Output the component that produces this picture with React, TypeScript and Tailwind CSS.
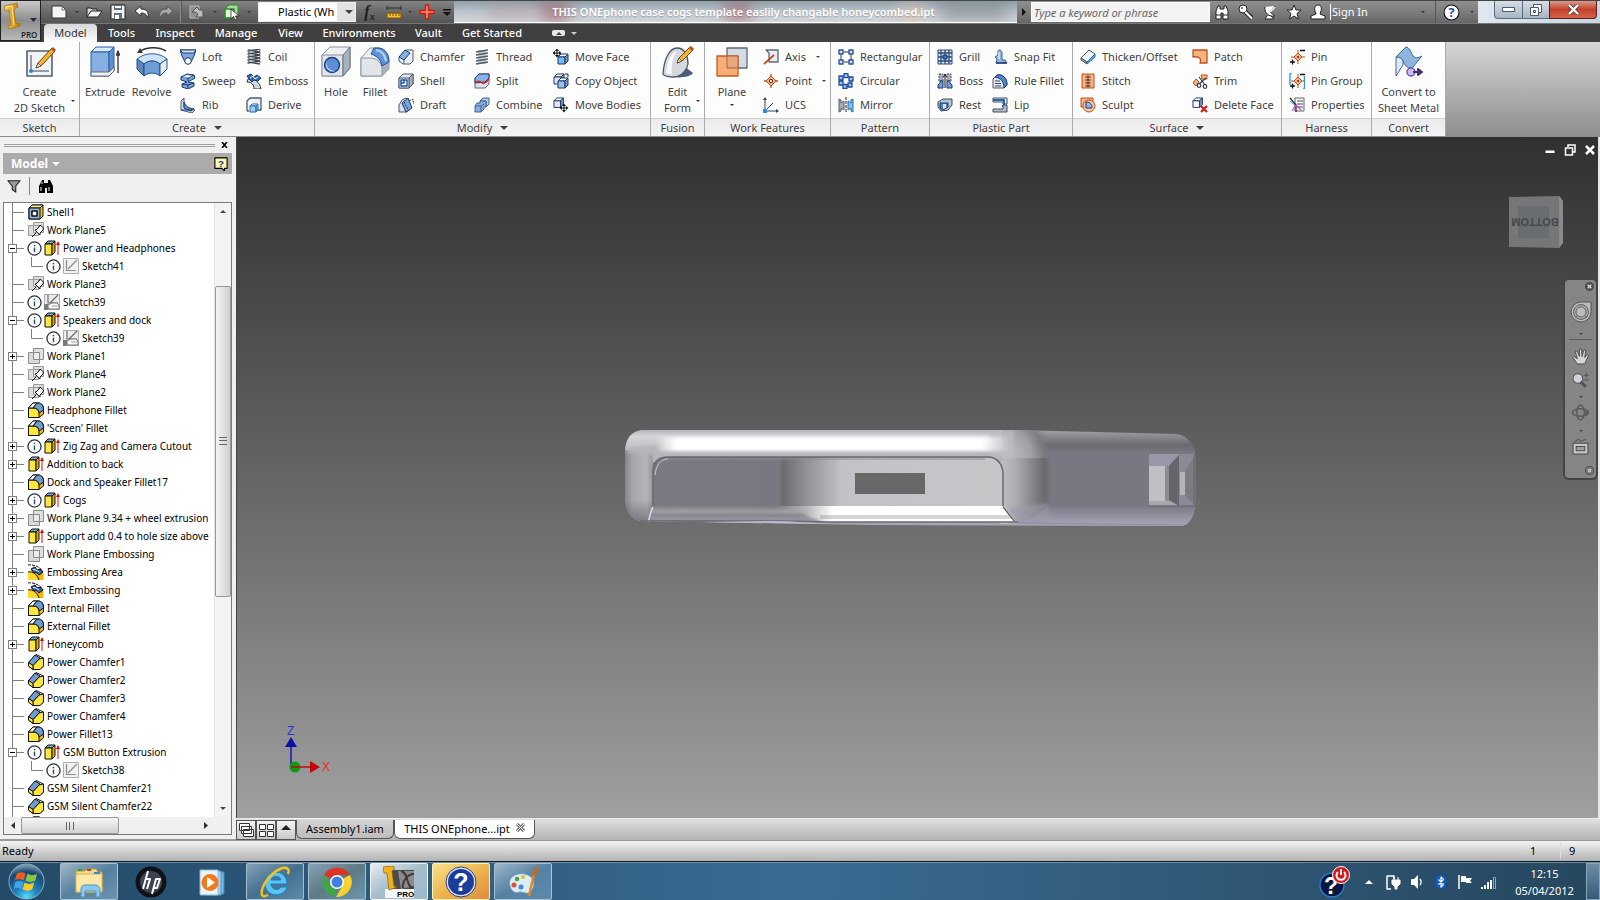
import React from "react";
import clsx from "clsx";

type IconProps = { size?: number; box?: string; children?: React.ReactNode };

const Svg: React.FC<IconProps> = ({ size = 16, box = "0 0 16 16", children }) => (
  <svg width={size} height={size} viewBox={box} fill="none" className="shrink-0" strokeLinejoin="round">
    {children}
  </svg>
);

const Big: React.FC<{ children: React.ReactNode }> = ({ children }) => (
  <Svg size={32} box="0 0 32 32">
    {children}
  </Svg>
);

const Arrow: React.FC<{ className?: string; size?: number; up?: boolean }> = ({
  className = "text-[#444]",
  size = 6,
  up,
}) => (
  <svg width={size} height={size / 2} viewBox="0 0 6 3" className={clsx("shrink-0", className)}>
    <path d={up ? "M0 3L3 0L6 3Z" : "M0 0L3 3L6 0Z"} fill="currentColor" />
  </svg>
);

const NAVY = "#1b3a70";
const BLUE = "#8fb6e4";
const ORANGE = "#f9b183";
const RUST = "#b9531a";

// 32px ribbon icons
const big: Record<string, React.ReactNode> = {
  sketch: (
    <Big>
      <path d="M3 5H28V30H3Z" fill="#f1f4f7" stroke="#555f6b" strokeWidth="1.6" />
      <path d="M7 9V26M7 25H25" stroke="#3a4450" />
      <circle cx="7" cy="25" r="2" fill="#2f7fd0" />
      <path d="M12 22L14 17L28 2L31 5L17 20Z" fill="#f6b32d" stroke="#6b4712" />
      <path d="M27 3L29 1L32 4L30 6Z" fill="#b5502a" />
      <path d="M12 22L14 17L17 20Z" fill="#f3dcb4" stroke="#333" strokeWidth=".6" />
    </Big>
  ),
  extrude: (
    <Big>
      <path d="M2 6L7 1H25L20 6Z" fill="#dbe9fa" stroke="#2b5ca8" />
      <path d="M2 6H20V30H2Z" fill="#86b0e2" stroke="#2b5ca8" />
      <path d="M20 6L25 1V25L20 30Z" fill="#5f8fce" stroke="#2b5ca8" />
      <path d="M2 26H20L25 21V25L20 30H2Z" fill="#eef1f5" stroke="#667" />
      <path d="M29 27V7M27.500 9L29 5L30.500 9Z" stroke="#333" fill="#333" strokeWidth="1.300" />
    </Big>
  ),
  revolve: (
    <Big>
      <path d="M3 6C9 1 22 0 30 5" stroke="#333" strokeWidth="1.500" />
      <path d="M1 7L4 2L7 7Z" fill="#333" />
      <path d="M1 13C9 6 23 6 31 13L24 18C19 14 13 14 8 18Z" fill="#cfe1f7" stroke="#2b5ca8" />
      <path d="M1 13V23L8 30V18Z" fill="#5d86bd" stroke="#24508f" />
      <path d="M8 18C13 14 19 14 24 18V30C19 26 13 26 8 30Z" fill="#6f9dd6" stroke="#24508f" />
      <path d="M31 13V23L24 30V18Z" fill="#e9eef6" stroke="#24508f" />
    </Big>
  ),
  hole: (
    <Big>
      <path d="M2 9L10 1H30V22L23 30H2Z" fill="#eef0f3" stroke="#8a93a0" />
      <path d="M2 9H23V30H2Z" fill="#e1e5ea" stroke="#8a93a0" />
      <path d="M23 9L30 1V22L23 30Z" fill="#a9b1bc" stroke="#667080" />
      <circle cx="12" cy="19" r="7.500" fill="#5c8fd6" stroke="#173f86" strokeWidth="1.400" />
      <path d="M7 14A8 8 0 0 0 16 25A7.500 7.500 0 0 1 7 14Z" fill="#dcebff" />
    </Big>
  ),
  fillet: (
    <Big>
      <path d="M2 12L11 2H20C27 3 30 9 30 16V23L23 30H2Z" fill="#eef0f3" stroke="#8a93a0" />
      <path d="M23 18L30 15V23L23 30Z" fill="#a9b1bc" />
      <path d="M2 12H11C18 12 23 17 23 23V30H2Z" fill="#e1e4e8" stroke="#8a93a0" />
      <path d="M15 2H20C27 3 30 9 30 16L23 20C22 14 18 10 12 8Z" fill="#5f94da" stroke="#24508f" />
      <path d="M17 4C23 5 26 9 27 15" stroke="#b8d3f4" strokeWidth="2" />
    </Big>
  ),
  form: (
    <Big>
      <path d="M6 30C16 33 29 31 31 27L22 20Z" fill="#4a5d7d" />
      <path d="M1 28C2 12 8 2 15 2C23 2 26 10 26 18C25 24 20 30 12 31C6 31 2 30 1 28Z" fill="#d4d9df" stroke="#4b5768" strokeWidth="1.300" />
      <path d="M4 27C5 15 9 6 15 5C11 11 9 18 10 29Z" fill="#f7f9fb" />
      <path d="M15 17L17 12L28 1L31 4L20 15Z" fill="#f6b32d" stroke="#6b4712" />
      <path d="M15 17L17 12L20 15Z" fill="#f3dcb4" stroke="#333" strokeWidth=".6" />
      <path d="M27 2L29 0L32 3L30 5Z" fill="#b5502a" />
    </Big>
  ),
  plane: (
    <Big>
      <path d="M11 2H31V22H11Z" fill="#d5dae2" stroke="#5d6877" strokeWidth="1.300" />
      <path d="M1 10H22V30H1Z" fill="#fbad78" stroke="#c35c1c" strokeWidth="1.300" />
      <path d="M11 10H22V22H11Z" fill="#e9a57b" stroke="#9c6a4c" />
    </Big>
  ),
  sheet: (
    <Big>
      <path d="M3 11L13 1C16 1 18 6 20 10C23 13 27 11 29 10L20 21C16 24 12 20 10 15C9 12 6 11 3 11Z" fill="#8db5e0" stroke="#44688f" />
      <path d="M3 11C6 11 9 12 10 15V19L3 30Z" fill="#dce8f5" stroke="#44688f" />
      <circle cx="18" cy="26" r="4" fill="#cdbcf0" stroke="#6b54a8" strokeWidth="1.400" />
      <path d="M20 26H26M25 23L29 26L25 29Z" stroke="#42306f" fill="#42306f" strokeWidth="2" />
    </Big>
  ),
};

const Cube = ({ x = 0, y = 0, s = 1, f = BLUE }: { x?: number; y?: number; s?: number; f?: string }) => (
  <g transform={`translate(${x} ${y}) scale(${s})`} stroke={NAVY}>
    <path d="M1 4L4 1H11L8 4Z" fill="#fff" />
    <path d="M1 4H8V11H1Z" fill={f} />
    <path d="M8 4L11 1V8L8 11Z" fill="#7f93b0" />
  </g>
);

const Cross = ({ x, y }: { x: number; y: number }) => (
  <g transform={`translate(${x} ${y})`} fill="#111">
    <path d="M3.500 1H4.500V7H3.500ZM1 3.500H7V4.500H1Z" />
    <path d="M4 -.5L6 2H2ZM4 8.500L6 6H2ZM-.5 4L2 2V6ZM8.500 4L6 2V6Z" />
  </g>
);

const Scissors = () => (
  <g stroke="#333d4d" strokeWidth="1.200">
    <path d="M7 4L13 12M14 5L7 11" />
    <circle cx="7" cy="12.500" r="1.800" fill="#fff" />
    <circle cx="13" cy="13.500" r="1.800" fill="#fff" />
  </g>
);

const PinMark = () => (
  <>
    <path d="M9 1V15M2 8H16" stroke={RUST} />
    <path d="M9 4L13 8L9 12L5 8Z" fill={ORANGE} stroke={RUST} />
    <circle cx="9" cy="8" r="1" fill="#6b2b0a" />
    <path d="M11 1.500H16M1 13H6M3.500 10.500V15.500" stroke="#111" strokeWidth="1.300" />
  </>
);

// 16px ribbon icons
const small: Record<string, React.ReactNode> = {
  Loft: (
    <>
      <path d="M0 1H16L14 7L11 13H5L2 7Z" fill="#7ea8dd" stroke={NAVY} />
      <path d="M0 1H16L14 4H3Z" fill="#d9e7f8" stroke={NAVY} />
      <circle cx="8" cy="12" r="3.300" fill="#f3f7fc" stroke={NAVY} />
    </>
  ),
  Sweep: (
    <>
      <path d="M1 4L7 1L14 2L15 5L8 9L14 10V13L8 16L2 14V11L7 9L1 7Z" fill="#77a3da" stroke={NAVY} />
      <path d="M1 4L8 5L14 2M8 5V8M8 12L14 10M8 12V15M2 11L8 12" stroke={NAVY} />
      <path d="M2 4.500L7 2L12 3L8 4.500Z" fill="#eaf2fc" />
    </>
  ),
  Rib: (
    <>
      <path d="M1 4L4 1V10L15 13L12 16L1 13Z" fill="#d4dbe5" stroke="#4d596c" />
      <path d="M4 5C6 10 9 11 14 12L11 14L4 11Z" fill="#5b92db" stroke={NAVY} />
      <path d="M1 13H12" stroke={NAVY} />
    </>
  ),
  Coil: (
    <>
      {[2, 5, 8, 11, 14].map((y) => (
        <path key={y} d={`M2 ${y}L14 ${y - 2}M2 ${y - 1}L14 ${y + 1}`} stroke="#3d4650" strokeWidth="1.300" />
      ))}
      <path d="M2 1V15M14 0V15" stroke="#6a727b" strokeDasharray="2 1" />
    </>
  ),
  Emboss: (
    <>
      <path d="M2 6C8 5 14 9 15 16H8C8 12 6 9 1 9Z" fill="#d3d8df" stroke="#333" />
      <path d="M1 3L5 1L8 4L11 2L15 5L12 8L8 7L6 9L3 6Z" fill="#2b66b8" stroke={NAVY} />
      <path d="M4 5L7 3L9 6L12 4" stroke="#fff" />
    </>
  ),
  Derive: (
    <>
      <path d="M4 1H15V13H12M1 14V4L4 1M1 14H3" fill="#eef0f3" stroke="#4d596c" strokeWidth="1.300" />
      <path d="M4 9L6 7H12L10 9Z" fill="#fff" stroke="#1f6fb8" />
      <path d="M4 9H10V15H4ZM10 9L12 7V13L10 15Z" fill="#9fd0f3" stroke="#1f6fb8" />
    </>
  ),
  Chamfer: (
    <>
      <path d="M1 8L8 1H15V12L12 15H5L1 12Z" fill="#eceff3" stroke="#4d596c" />
      <path d="M1 8L7 1L12 4L6 11Z" fill="#86b0e2" stroke={NAVY} />
      <path d="M6 11V15" stroke="#4d596c" />
    </>
  ),
  Shell: (
    <>
      <path d="M1 5L5 1H15V11L11 15H1Z" fill="#e3e7ed" stroke="#4d596c" />
      <path d="M11 5L15 1V11L11 15Z" fill="#a8b2c0" stroke="#4d596c" />
      <path d="M1 5H11V15H1Z" fill="#dfe6ef" stroke="#4d596c" />
      <path d="M3 7H9V13H3ZM3 10H6V7" fill="#fff" stroke="#1e55b0" strokeWidth="1.400" />
    </>
  ),
  Draft: (
    <>
      <path d="M1 8L4 3L8 1L11 4L9 15H1Z" fill="#dde1e7" stroke="#4d596c" />
      <path d="M4 6L10 1L14 11L8 15Z" fill="#78a7e2" stroke={NAVY} />
      <path d="M6 5L11 14M11 4L15 2L15.500 7" stroke="#333" strokeDasharray="2 1" />
    </>
  ),
  Thread: (
    <>
      <path d="M4 1H12V15H4Z" fill="#c9d0d8" />
      {[2, 5, 8, 11, 14].map((y) => (
        <path key={y} d={`M2 ${y + 1}L14 ${y - 1}`} stroke="#515c69" strokeWidth="1.300" />
      ))}
    </>
  ),
  Split: (
    <>
      <path d="M1 5L5 1H15V11L11 15H1Z" fill="#dfe3e9" stroke="#5d6877" />
      <path d="M1 5L5 1H15V5L11 9L1 10Z" fill="#86b4ea" stroke={NAVY} />
      <path d="M1 10C4 7 6 8 8 10C11 12 13 8 15 6" stroke="#e02020" strokeWidth="1.500" />
    </>
  ),
  Combine: (
    <>
      <path d="M6 4L9 1H15V7L12 10V4Z" fill="#b6cdea" stroke="#3e6094" />
      <path d="M6 4H12V10H10V12L7 15H1V9L3 6H6Z" fill="#8ab0df" stroke="#3e6094" />
      <path d="M1 9H7V15M7 9L10 7" stroke="#3e6094" />
    </>
  ),
  "Move Face": (
    <>
      <Cube x={4} y={4} f="#79bdf0" />
      <Cross x={0} y={0} />
    </>
  ),
  "Copy Object": (
    <>
      <Cube f="#e3e7ec" />
      <Cube x={4} y={4} f="#9dbfea" />
      <path d="M12 1L15 1V4" stroke="#222" />
    </>
  ),
  "Move Bodies": (
    <>
      <Cube s={0.95} f="#e3e7ec" />
      <Cross x={7} y={7} />
    </>
  ),
  Axis: (
    <>
      <path d="M3 1H15V13H6V4Z" fill="#e8ebef" stroke="#5d6877" strokeWidth="1.300" />
      <path d="M1 15L11 6" stroke="#c3481a" strokeWidth="1.700" />
    </>
  ),
  Point: (
    <>
      <path d="M8 1V15M1 8H15" stroke={RUST} strokeWidth="1.300" />
      <path d="M8 3L13 8L8 13L3 8Z" fill={ORANGE} stroke={RUST} />
      <circle cx="8" cy="8" r="1.600" fill="#fff" stroke="#5b2408" />
    </>
  ),
  UCS: (
    <>
      <path d="M2 1V14H15M2 14L10 6" stroke="#3b444f" />
      <path d="M0 3L2 0L4 3ZM13 12L16 14L13 16Z" fill="#3b444f" />
      <rect x="0" y="12" width="4" height="4" fill="#2f8be0" />
    </>
  ),
  Rectangular: (
    <>
      <path d="M6 3H11M6 13H11M3 6V11M13 6V11" stroke="#333" />
      {[[1, 1], [11, 1], [1, 11], [11, 11]].map(([x, y]) => (
        <rect key={`${x}-${y}`} x={x} y={y} width="4" height="4" fill="#d8e6f8" stroke="#1e4f9c" strokeWidth="1.300" />
      ))}
    </>
  ),
  Circular: (
    <>
      <circle cx="8" cy="8" r="5.500" stroke="#333" />
      {[[6, 0.7], [11, 4], [10, 10], [5, 11.5], [1, 8], [1, 3]].map(([x, y]) => (
        <rect key={`${x}-${y}`} x={x} y={y} width="4" height="4" fill="#9ec1ef" stroke="#1e4f9c" strokeWidth="1.300" />
      ))}
    </>
  ),
  Mirror: (
    <>
      <path d="M8 0V16" stroke="#222" strokeDasharray="3 1" />
      <path d="M1 2L3 3V6L6 4V13L3 11V14L1 15Z" fill="#a6adb5" stroke="#555e69" />
      <path d="M15 2L13 3V6L10 4V13L13 11V14L15 15Z" fill="#7fc0ec" stroke="#2870a8" />
    </>
  ),
  Grill: (
    <>
      <rect x="1" y="1" width="14" height="14" fill="#dce7f5" stroke="#2c4a77" />
      <path d="M4 1V15M8 1V15M12 1V15M1 4H15M1 8H15M1 12H15" stroke="#2c4a77" strokeWidth="1.300" />
      <rect x="6" y="6" width="4" height="4" fill="#3f70bd" stroke={NAVY} />
    </>
  ),
  Boss: (
    <>
      <path d="M2 1H6V8H2ZM10 1H14V8H10Z" fill="#aab3bf" stroke="#444f5f" strokeDasharray="2 1" />
      <path d="M1 15V12L3 10V8H6V15ZM15 15V12L13 10V8H10V15Z" fill="#6f9edc" stroke={NAVY} />
      <path d="M8 2V15M6.500 4L8 1L9.500 4" stroke="#111" />
    </>
  ),
  Rest: (
    <>
      <path d="M1 5L6 2H15V8L11 13L4 14L1 10Z" fill="#b9c2ce" stroke="#3b4a62" />
      <path d="M3 6H11V10L6 13L3 11Z" fill="#4b7fc9" stroke={NAVY} />
      <path d="M6 7H9V11L6 12Z" fill="#dbe8f8" />
    </>
  ),
  "Snap Fit": (
    <>
      <path d="M6 2C7 0 10 1 10 4V11H13L15 14H4L5 10L3 8L6 6Z" fill="#94b5df" stroke="#3d5f92" />
      <path d="M4 14H15" stroke={NAVY} strokeWidth="1.500" />
      <path d="M7 3V10" stroke="#fff" />
    </>
  ),
  "Rule Fillet": (
    <>
      <path d="M1 6L5 2C11 1 15 5 15 12L12 15H1Z" fill="#e3e7ec" stroke="#4d596c" />
      <path d="M5 2C11 1 15 5 15 12L12 15C12 9 9 5 3 4Z" fill="#4d86d6" stroke={NAVY} />
      <path d="M3 8H8M3 10.500H9M3 13H9" stroke="#3b4a62" />
    </>
  ),
  Lip: (
    <>
      <path d="M1 1H15V7H11V5H1Z" fill="#f0f3f7" stroke="#3b4a62" />
      <path d="M1 3H12V9H10" stroke="#2a62b8" strokeWidth="2" />
      <path d="M11 8H15V15H1V12H11Z" fill="#b7bec8" stroke="#3b4a62" />
    </>
  ),
  "Thicken/Offset": (
    <>
      <path d="M1 9L9 1L15 5L7 13Z" fill="#f2f5f8" stroke="#4d596c" />
      <path d="M1 9L7 13V15L1 11Z" fill="#9aa5b3" stroke="#4d596c" />
      <path d="M7 13L15 5V8L7 15Z" fill="#67b1ea" stroke="#1f6fb8" />
    </>
  ),
  Stitch: (
    <>
      <rect x="2" y="1" width="12" height="14" fill={ORANGE} stroke={RUST} />
      <path d="M8 1V15" stroke={RUST} />
      <path d="M5.500 4H10.500M5.500 7H10.500M5.500 10H10.500M5.500 13H10.500" stroke="#222" strokeWidth="1.200" />
    </>
  ),
  Sculpt: (
    <>
      <path d="M1 1H13V10H1Z" fill={ORANGE} stroke={RUST} />
      <circle cx="9" cy="9" r="6" fill="#f9c5a3" stroke={RUST} />
      <path d="M6 5C10 5 12 7 12 11H6Z" fill="#8fb8ec" stroke={NAVY} />
    </>
  ),
  Patch: <path d="M1 1H15V14H8C10 9 6 7 1 8Z" fill={ORANGE} stroke={RUST} strokeWidth="1.300" />,
  Trim: (
    <>
      <path d="M9 2H15V6H10ZM1 10L4 6L7 9L4 13Z" fill={ORANGE} stroke={RUST} />
      <Scissors />
    </>
  ),
  "Delete Face": (
    <>
      <Cube f="#f3f6fa" s={0.95} />
      <path d="M9 9L15 15M15 9L9 15" stroke="#d51c1c" strokeWidth="2.200" />
    </>
  ),
  Pin: <PinMark />,
  "Pin Group": (
    <>
      <PinMark />
      <path d="M3 0H1V12M14 16H15.500V3" stroke="#2f9be8" strokeWidth="1.400" />
    </>
  ),
  Properties: (
    <>
      <path d="M6 1H15V14H6Z" fill="#f6f6f6" stroke="#666" />
      <path d="M8 4H14M8 7H14M8 10H14" stroke="#555" />
      <path d="M1 1L7 8V15" stroke="#333" strokeWidth="1.300" />
      <path d="M7 8L3 14M7 8L12 13" stroke="#c74ad0" strokeWidth="1.300" />
      <path d="M1 4L7 9" stroke="#2f8be0" />
    </>
  ),
};

type PanelProps = { label: string; width: string; more?: boolean; children: React.ReactNode };

const Panel: React.FC<PanelProps> = ({ label, width, more, children }) => (
  <section className={clsx("flex shrink-0 flex-col border-r border-[#aaa] bg-[#fdfdfd]", width)}>
    <div className="flex flex-1 pt-[3px]">{children}</div>
    <h2 className="flex h-[18px] items-center justify-center gap-2 border-t border-[#d0d0d0] bg-linear-to-b from-[#ebebeb] to-[#f3f3f3]">
      {label}
      {more && <Arrow size={8} />}
    </h2>
  </section>
);

type BigButtonProps = { icon: string; lines: string[]; width: string; more?: boolean };

const BigButton: React.FC<BigButtonProps> = ({ icon, lines, width, more }) => (
  <button className={clsx("relative flex shrink-0 flex-col items-center pt-px leading-4", width)}>
    {big[icon]}
    <span className="mt-1.5 whitespace-nowrap">
      {lines.map((line) => (
        <span key={line} className="block">
          {line}
        </span>
      ))}
    </span>
    {more && lines.length === 1 && <Arrow size={4} className="mt-1 text-[#333]" />}
    {more && lines.length > 1 && (
      <span className="absolute right-1 bottom-4">
        <Arrow size={4} className="text-[#333]" />
      </span>
    )}
  </button>
);

const Column: React.FC<{ items: string[]; width?: string; more?: string[] }> = ({ items, width, more = [] }) => (
  <div className={clsx("flex shrink-0 flex-col", width)}>
    {items.map((item) => (
      <button key={item} className="flex h-6 items-center gap-1.5 whitespace-nowrap">
        <Svg>{small[item]}</Svg>
        {item}
        {more.includes(item) && (
          <span className="ml-1">
            <Arrow size={4} />
          </span>
        )}
      </button>
    ))}
  </div>
);

const Ribbon = () => (
  <div className="flex h-[95px] shrink-0 overflow-hidden border-b border-[#8b8b8b] bg-linear-to-b from-[#d6d6d6] to-[#8e8e8e] text-[#3f3f3f]">
    <Panel label="Sketch" width="w-20">
      <BigButton icon="sketch" lines={["Create", "2D Sketch"]} width="w-full" more />
    </Panel>
    <Panel label="Create" width="w-[235px]" more>
      <BigButton icon="extrude" lines={["Extrude"]} width="w-[50px]" />
      <BigButton icon="revolve" lines={["Revolve"]} width="w-[43px]" />
      <div className="w-[7px]" />
      <Column items={["Loft", "Sweep", "Rib"]} width="w-[66px]" />
      <Column items={["Coil", "Emboss", "Derive"]} />
    </Panel>
    <Panel label="Modify" width="w-[336px]" more>
      <BigButton icon="hole" lines={["Hole"]} width="w-[42px]" />
      <BigButton icon="fillet" lines={["Fillet"]} width="w-9" />
      <div className="w-[5px]" />
      <Column items={["Chamfer", "Shell", "Draft"]} width="w-[76px]" />
      <Column items={["Thread", "Split", "Combine"]} width="w-[79px]" />
      <Column items={["Move Face", "Copy Object", "Move Bodies"]} />
    </Panel>
    <Panel label="Fusion" width="w-[54px]">
      <BigButton icon="form" lines={["Edit", "Form"]} width="w-full" more />
    </Panel>
    <Panel label="Work Features" width="w-[126px]">
      <BigButton icon="plane" lines={["Plane"]} width="w-[54px]" more />
      <div className="w-1" />
      <Column items={["Axis", "Point", "UCS"]} more={["Axis", "Point"]} />
    </Panel>
    <Panel label="Pattern" width="w-[99px]">
      <div className="w-[7px]" />
      <Column items={["Rectangular", "Circular", "Mirror"]} />
    </Panel>
    <Panel label="Plastic Part" width="w-[143px]">
      <div className="w-[7px]" />
      <Column items={["Grill", "Boss", "Rest"]} width="w-[55px]" />
      <Column items={["Snap Fit", "Rule Fillet", "Lip"]} />
    </Panel>
    <Panel label="Surface" width="w-[209px]" more>
      <div className="w-[7px]" />
      <Column items={["Thicken/Offset", "Stitch", "Sculpt"]} width="w-[112px]" />
      <Column items={["Patch", "Trim", "Delete Face"]} />
    </Panel>
    <Panel label="Harness" width="w-[90px]">
      <div className="w-[7px]" />
      <Column items={["Pin", "Pin Group", "Properties"]} />
    </Panel>
    <Panel label="Convert" width="w-[74px]">
      <BigButton icon="sheet" lines={["Convert to", "Sheet Metal"]} width="w-full" />
    </Panel>
  </div>
);

const Tool: React.FC<{ label: string; width: string; children: React.ReactNode }> = ({ label, width, children }) => (
  <button aria-label={label} className={clsx("flex h-full shrink-0 items-center justify-center", width)}>
    {children}
  </button>
);

const QuickAccess = () => (
  <div className="flex h-full shrink-0 items-center bg-linear-to-b from-[#858585] via-[#686868] to-[#555] pl-[5px]">
    <Tool label="New" width="w-[26px]">
      <Svg><path d="M1 2H11L15 6V14H1Z" fill="#f4f4f4" stroke="#333" /><path d="M11 2V6H15" stroke="#777" /></Svg>
    </Tool>
    <Tool label="New options" width="w-2.5"><Arrow size={4} className="text-[#333]" /></Tool>
    <Tool label="Open" width="w-6">
      <Svg><path d="M1 13V4H5L6 5H11V7" fill="#d5dade" stroke="#222" /><path d="M1 13L5 7H16L12 13Z" fill="#f4f4f4" stroke="#222" /></Svg>
    </Tool>
    <Tool label="Save" width="w-6">
      <Svg><path d="M1 1H15V15H1Z" fill="#f0f2f4" stroke="#222" /><path d="M4 1H12V6H4ZM4 9H12V15H4Z" fill="#5e6c7c" /><path d="M5 2H11V4H5ZM5 11H9V15H5Z" fill="#fff" /></Svg>
    </Tool>
    <Tool label="Undo" width="w-6">
      <Svg><path d="M1 7L7 2V5C13 5 15 8 14 14C12 10 11 9 7 9V12Z" fill="#fff" stroke="#333" /></Svg>
    </Tool>
    <Tool label="Redo" width="w-6">
      <Svg><path d="M15 7L9 2V5C3 5 1 8 2 14C4 10 5 9 9 9V12Z" fill="#aaa" stroke="#555" /></Svg>
    </Tool>
    <span className="mx-0.5 h-full w-0.5 border-l border-[#8c8c8c] bg-[#555]" />
    <Tool label="Update" width="w-[26px]">
      <Svg><path d="M1 2H10V14H1Z" fill="#8f8f8f" stroke="#bbb" /><path d="M3 8L8 3L10 6H14V13H7L9 10L6 8Z" fill="#bdbdbd" stroke="#555" /></Svg>
    </Tool>
    <Tool label="Update options" width="w-2.5"><Arrow size={4} className="text-[#333]" /></Tool>
    <Tool label="Select" width="w-6">
      <Svg>
        <path d="M1 5L5 1H14V10L10 14H1Z" fill="#a8d89a" stroke="#2f8a2a" />
        <path d="M1 5H10V14H1Z" fill="#e3f3df" stroke="#2f8a2a" strokeWidth="1.500" />
        <path d="M7 5V15L9.500 12.500L11 16L13 15L11.500 12H15Z" fill="#fff" stroke="#222" strokeWidth=".8" />
      </Svg>
    </Tool>
    <Tool label="Select options" width="w-2.5"><Arrow size={4} className="text-[#333]" /></Tool>
    <label className="relative ml-1 flex h-5 w-[98px] items-center border border-[#eee] bg-[#ececec] text-black">
      <select aria-label="Material" className="h-full w-full appearance-none overflow-hidden border-r-[18px] border-[#e2e2e2] bg-white pl-[19px]">
        <option>Plastic (Wh</option>
      </select>
      <span className="pointer-events-none absolute right-0.5"><Arrow size={8} /></span>
    </label>
    <Tool label="Parameters" width="w-[27px]">
      <span className="font-['Liberation_Serif',serif] text-base font-bold text-[#1c1c1c] italic">
        f<sub className="text-[10px]">x</sub>
      </span>
    </Tool>
    <Tool label="Measure" width="w-[22px]">
      <Svg><path d="M1 4H15M1 2V6M15 2V6" stroke="#2a2a2a" /><path d="M1 9H15V14H1Z" fill="#f7c12d" stroke="#7a4c0a" /><path d="M4 9V12M7 9V12M10 9V12M13 9V12" stroke="#7a4c0a" /></Svg>
    </Tool>
    <Tool label="Measure options" width="w-2.5"><Arrow size={4} className="text-[#333]" /></Tool>
    <Tool label="Add" width="w-6">
      <Svg><path d="M6.500 1H9.500V6.500H15V9.500H9.500V15H6.500V9.500H1V6.500H6.500Z" fill="#f38a6d" stroke="#d3190c" strokeWidth="1.300" /></Svg>
    </Tool>
    <Tool label="Customize" width="w-[15px]">
      <svg width="8" height="7" viewBox="0 0 8 7"><path d="M0 0H8V1.500H0ZM0 3H8L4 7Z" fill="#111" /></svg>
    </Tool>
  </div>
);

const InfoBar = () => (
  <div className="flex h-full shrink-0 items-center bg-linear-to-b from-[#8f8f8f] via-[#7d7d7d] to-[#666] text-white">
    <button aria-label="Collapse search" className="flex w-3.5 justify-center">
      <svg width="4" height="8" viewBox="0 0 4 8"><path d="M0 0L4 4L0 8Z" fill="#111" /></svg>
    </button>
    <input
      aria-label="Search help"
      placeholder="Type a keyword or phrase"
      className="h-5 w-[179px] border border-white bg-[#f3f3f3] px-0.5 italic placeholder:text-[#666]"
    />
    <Tool label="Find" width="w-6">
      <Svg><path d="M2 15V7L4 2H6V5H10V2H12L14 7V15H9V9H7V15Z" fill="#fff" stroke="#222" /><path d="M2 11H7M9 11H14" stroke="#222" /></Svg>
    </Tool>
    <Tool label="Subscription" width="w-6">
      <Svg><circle cx="5" cy="5" r="4" fill="#fff" stroke="#222" /><circle cx="4" cy="4" r="1" fill="#444" /><path d="M7.500 8L14 14.500M12 12.500L14 11" stroke="#222" strokeWidth="4" /><path d="M7.500 8L14 14.500" stroke="#fff" strokeWidth="2.200" /></Svg>
    </Tool>
    <Tool label="Communication" width="w-6">
      <Svg><path d="M3 3C2 9 7 13 13 12L8 8L13 2M5 12L3 15H12L9 12" fill="#fff" stroke="#222" /><path d="M8 8L13 3" stroke="#fff" strokeWidth="1.500" /></Svg>
    </Tool>
    <Tool label="Favorites" width="w-6">
      <Svg><path d="M8 1L10 6H15L11 9.500L12.500 15L8 12L3.500 15L5 9.500L1 6H6Z" fill="#fff" stroke="#222" /></Svg>
    </Tool>
    <Tool label="Account" width="w-6">
      <Svg><path d="M8 1C11 1 12 4 11 7L10 10L15 12V15H1V12L6 10L5 7C4 4 5 1 8 1Z" fill="#fff" stroke="#222" /></Svg>
    </Tool>
    <button className="flex h-full w-[106px] items-center border-r border-[#555]">
      <span className="border-l border-white px-px leading-4">Sign In</span>
      <span className="ml-auto pr-2.5"><Arrow size={4} className="text-[#333]" /></span>
    </button>
    <Tool label="Help" width="w-[30px]">
      <Svg size={17}>
        <circle cx="8" cy="8" r="7" fill="#fff" stroke="#111" />
        <text x="8" y="12.500" textAnchor="middle" fontSize="12" fontWeight="bold" fill="#1b4fb0" fontFamily="Open Sans">?</text>
      </Svg>
    </Tool>
    <Tool label="Help options" width="w-3"><Arrow size={4} className="text-[#333]" /></Tool>
  </div>
);

const tabs: [string, string][] = [
  ["Tools", "w-[49px]"],
  ["Inspect", "w-[58px]"],
  ["Manage", "w-16"],
  ["View", "w-[45px]"],
  ["Environments", "w-[92px]"],
  ["Vault", "w-[47px]"],
  ["Get Started", "w-20"],
];

const Header = () => (
  <header className="flex h-[42px] shrink-0 bg-[#404040]">
    <button aria-label="Application menu" className="h-[41px] w-[41px] shrink-0 border border-[#222] bg-linear-to-b from-[#c9c9c9] via-[#8e8e8e] to-[#b9b9b9]">
      <svg width="39" height="39" viewBox="0 0 39 39">
        <defs>
          <linearGradient id="gold" x1="0" x2="1">
            <stop offset="0" stopColor="#ffd45a" />
            <stop offset="1" stopColor="#c07a05" />
          </linearGradient>
        </defs>
        <path d="M3 5L16 2L17 6L13 8L15 23L19 22V25L8 28L7 25L10 24L8 9L4 10Z" fill="url(#gold)" stroke="#a96c06" strokeWidth=".7" />
        <path d="M5 6L11 5L13 24" stroke="#ffe9a3" fill="none" />
        <path d="M29 17H36L32.500 21Z" fill="#222b3a" />
        <text x="20" y="37" fontSize="8" fill="#222" fontFamily="Open Sans" fontWeight="600">PRO</text>
      </svg>
    </button>
    <div className="flex min-w-0 flex-1 flex-col">
      <div className="flex h-6 border-t border-b border-t-[#444] border-b-[#777]">
        <QuickAccess />
        <div className="relative flex min-w-0 flex-1 items-center justify-center overflow-hidden border-b border-white bg-linear-to-b from-[#8fa0aa] via-[#bcc4cb] to-[#d3d7db] pl-4">
          <span className="absolute left-[85px] h-5 w-8 rounded-full bg-[#a04a52]/60 blur-sm" />
          <span className="absolute left-[270px] h-5 w-7 rounded-full bg-[#a04a52]/60 blur-sm" />
          <span className="absolute left-8 h-3 w-12 rounded-full bg-[#b07c80]/40 blur-sm" />
          <span className="absolute right-2 h-4 w-[70px] rounded-full bg-[#555]/40 blur-sm" />
          <span className="absolute right-[90px] h-5 w-8 rounded-full bg-[#e0c5b0]/60 blur-sm" />
          <h1 className="relative truncate font-semibold text-white text-shadow-xs">
            THIS ONEphone case cogs template easlily changable honeycombed.ipt
          </h1>
        </div>
        <InfoBar />
        <div className="flex h-full w-[122px] shrink-0 items-start bg-linear-to-r from-[#dfe8ee] to-[#c5d6e2] pl-4">
          <button aria-label="Minimize" className="flex h-[18px] w-[29px] items-center justify-center rounded-bl border border-t-0 border-[#5c6c7b] bg-linear-to-b from-[#d5dee6] to-[#a8b6c3]">
            <svg width="13" height="5"><path d="M.5 .5H12.500V4.500H.5Z" fill="#fff" stroke="#4c5866" /></svg>
          </button>
          <button aria-label="Restore" className="flex h-[18px] w-[26px] items-center justify-center border-b border-[#5c6c7b] bg-linear-to-b from-[#d5dee6] to-[#a8b6c3]">
            <svg width="12" height="12" fill="none" stroke="#4c5866"><path d="M3.500 .5H11.500V8.500H3.500Z" fill="#fff" /><path d="M.5 3.500H8.500V11.500H.5Z" fill="#fff" /><path d="M3.500 6.500H5.500V8.500H3.500Z" /></svg>
          </button>
          <button aria-label="Close" className="flex h-[18px] w-12 items-center justify-center rounded-br border border-t-0 border-[#5a2018] bg-linear-to-b from-[#dd9a8c] via-[#c2402a] to-[#d5644a]">
            <svg width="13" height="11" viewBox="0 0 13 11"><path d="M2 1L11 10M11 1L2 10" stroke="#5a3a38" strokeWidth="4" /><path d="M2 1L11 10M11 1L2 10" stroke="#fff" strokeWidth="2.400" /></svg>
          </button>
        </div>
      </div>
      <nav className="flex flex-1 items-stretch pl-[3px] text-white">
        <button className="w-[53px] rounded-t-sm bg-linear-to-b from-[#d8d8d8] to-[#fdfdfd] text-[#333]">Model</button>
        {tabs.map(([name, width]) => (
          <button key={name} className={clsx("shrink-0 font-medium", width)}>
            {name}
          </button>
        ))}
        <button aria-label="Minimize ribbon" className="ml-5 flex items-center gap-1.5">
          <span className="flex h-1.5 w-[13px] items-center justify-center rounded-xs bg-[#e8e8ee]">
            <Arrow size={6} up />
          </span>
          <Arrow size={6} className="text-[#ccc]" />
        </button>
      </nav>
    </div>
  </header>
);

// icons of the model browser
const tree: Record<string, React.ReactNode> = {
  shell: (
    <g stroke="#111">
      <path d="M1 4L4 1H15V12L12 15H1Z" fill="#f5c400" />
      <path d="M1 4L4 1H15L12 4Z" fill="#fff38a" />
      <path d="M1 4H12V15H1Z" fill="#8ab0dc" />
      <path d="M4 7H9V12H4Z" fill="#fff" strokeWidth="1.500" />
    </g>
  ),
  plane: (
    <g stroke="#8a8a8a">
      <path d="M5.500 .5H15.500V11.500H5.500Z" fill="#e0e0e0" />
      <path d="M.5 4.500H11.500V15.500H.5Z" fill="#cfcfcf" fillOpacity=".8" />
      <path d="M5.500 4.500H11.500V11.500H5.500Z" fill="#ececec" />
    </g>
  ),
  pinned: (
    <g>
      <path d="M5.500 .5H15.500V10.500H5.500ZM.5 3.500H10.500V13.500H.5Z" fill="#dcdcdc" stroke="#9a9a9a" />
      <path d="M4 15L8 11" stroke="#111" />
      <path d="M7 8L12 13L12 11L15 8L15.500 6L12 3L11 5L8 8Z" fill="#fff" stroke="#111" />
    </g>
  ),
  extrude: (
    <g stroke="#111">
      <path d="M1 4L4 1H11L8 4Z" fill="#7aa5d8" />
      <path d="M1 4H8V15H1Z" fill="#ffe83a" />
      <path d="M8 4L11 1V12L8 15Z" fill="#e0a800" />
      <path d="M14 15V3" stroke="#d01010" />
      <path d="M12 5L14 1L16 5Z" fill="#d01010" stroke="none" />
    </g>
  ),
  sketch: (
    <g>
      <path d="M.5 .5H15.500V15.500H.5Z" fill="#f2f2f2" stroke="#b0b0b0" />
      <path d="M3.500 2V12.500H13M5 11L14 2" stroke="#8a8a8a" strokeWidth="1.200" />
    </g>
  ),
  shared: (
    <g>
      <path d="M.5 .5H15.500V15.500H.5Z" fill="#ededed" stroke="#aaa" />
      <path d="M4 1V9H14M6 9L14 1" stroke="#6c6c6c" strokeWidth="1.200" />
      <path d="M0 10H4V16H0Z" fill="#7b7b7b" />
      <path d="M4 11L8 9H13L15 11V15H6L4 14Z" fill="#fff" stroke="#777" />
      <path d="M8 12H14" stroke="#999" />
    </g>
  ),
  fillet: (
    <g stroke="#111">
      <path d="M.5 6L5 1H10C14 1 15.500 4 15.500 7V12L11 15.500H.5Z" fill="#f0b800" />
      <path d="M.5 6H5C9 6 11 9 11 11V15.500H.5Z" fill="#ffe83a" />
      <path d="M.5 6L5 1H9L5 6Z" fill="#fff" />
      <path d="M9 1H10C14 1 15.500 4 15.500 8L11 11C11 8 9 6 5 6Z" fill="#6d9bd2" />
    </g>
  ),
  chamfer: (
    <g stroke="#111">
      <path d="M.5 9L8 .5L15.500 4V12L12 15.500H5L.5 12Z" fill="#fff" />
      <path d="M5 15.500V11.500L11 5L15.500 4V12L12 15.500Z" fill="#ffe83a" />
      <path d="M.5 8.500L7 1L12 4L5 11.500Z" fill="#6d9bd2" />
      <path d="M.5 8.500L5 11.500V15.500L.5 12Z" fill="#ffe83a" />
    </g>
  ),
  emboss: (
    <g stroke="#111">
      <path d="M0 8C6 6 12 9 15 16H0Z" fill="#ffd92e" stroke="none" />
      <path d="M15.500 9V16H11C9 12 6 9 0 8" fill="#f0b800" stroke="none" />
      <path d="M0 8C5 7 9 10 11 16" />
      <path d="M0 1C5 0 13 3 15 8" strokeDasharray="3 1" />
      <path d="M3 5L7 3L9 6L12 5L15 8L11 11L8 8L6 9Z" fill="#2c62b0" />
      <path d="M5 5.500L8 6L11 8" stroke="#fff" />
    </g>
  ),
};

type Row = { icon: string; name: string; info?: boolean; child?: boolean; mark?: "+" | "-" };

const rows: Row[] = [
  { icon: "shell", name: "Shell1" },
  { icon: "pinned", name: "Work Plane5" },
  { icon: "extrude", name: "Power and Headphones", info: true, mark: "-" },
  { icon: "sketch", name: "Sketch41", info: true, child: true },
  { icon: "pinned", name: "Work Plane3" },
  { icon: "shared", name: "Sketch39", info: true },
  { icon: "extrude", name: "Speakers and dock", info: true, mark: "-" },
  { icon: "shared", name: "Sketch39", info: true, child: true },
  { icon: "plane", name: "Work Plane1", mark: "+" },
  { icon: "pinned", name: "Work Plane4" },
  { icon: "pinned", name: "Work Plane2" },
  { icon: "fillet", name: "Headphone Fillet" },
  { icon: "fillet", name: "'Screen' Fillet" },
  { icon: "extrude", name: "Zig Zag and Camera Cutout", info: true, mark: "+" },
  { icon: "extrude", name: "Addition to back", mark: "+" },
  { icon: "fillet", name: "Dock and Speaker Fillet17" },
  { icon: "extrude", name: "Cogs", info: true, mark: "+" },
  { icon: "plane", name: "Work Plane 9.34 + wheel extrusion", mark: "+" },
  { icon: "extrude", name: "Support add 0.4 to hole size above", mark: "+" },
  { icon: "plane", name: "Work Plane Embossing" },
  { icon: "emboss", name: "Embossing Area", mark: "+" },
  { icon: "emboss", name: "Text Embossing", mark: "+" },
  { icon: "fillet", name: "Internal Fillet" },
  { icon: "fillet", name: "External Fillet" },
  { icon: "extrude", name: "Honeycomb", mark: "+" },
  { icon: "chamfer", name: "Power Chamfer1" },
  { icon: "chamfer", name: "Power Chamfer2" },
  { icon: "chamfer", name: "Power Chamfer3" },
  { icon: "chamfer", name: "Power Chamfer4" },
  { icon: "fillet", name: "Power Fillet13" },
  { icon: "extrude", name: "GSM Button Extrusion", info: true, mark: "-" },
  { icon: "sketch", name: "Sketch38", info: true, child: true },
  { icon: "chamfer", name: "GSM Silent Chamfer21" },
  { icon: "chamfer", name: "GSM Silent Chamfer22" },
  { icon: "fillet", name: "" },
];

const Branch: React.FC<{ row: Row }> = ({ row }) => (
  <svg width={row.child ? 42 : row.info ? 23 : 24} height="18" fill="none" stroke="#808080" className="shrink-0">
    <path d="M8.500 0V18" />
    {row.child ? <path d="M27.500 0V9.500H39" /> : row.name && <path d="M8.500 9.500H20" />}
    {row.mark && (
      <>
        <rect x="4.500" y="5.500" width="8" height="8" fill="#fff" />
        <path d={row.mark === "+" ? "M6 9.500H11M8.500 7V12" : "M6 9.500H11"} stroke="#000" />
      </>
    )}
  </svg>
);

const TreeRow: React.FC<{ row: Row }> = ({ row }) => (
  <li className="flex h-[18px] items-center whitespace-nowrap">
    <Branch row={row} />
    {row.info && (
      <span className="mr-0.5 flex">
        <Svg size={15}>
          <circle cx="8" cy="8" r="7" fill="#fff" stroke="#2b3440" strokeWidth="1.400" />
          <path d="M8 7V12M8 4V5.500" stroke="#2b4a6b" strokeWidth="1.500" />
        </Svg>
      </span>
    )}
    <Svg>{tree[row.icon]}</Svg>
    <span className="ml-[3px]">{row.name}</span>
  </li>
);

const Browser = () => (
  <aside className="flex w-[236px] shrink-0 flex-col border-b border-[#999] bg-[#f0f0f0] pr-1 pb-1 pl-[3px] text-black">
    <div className="flex h-4 items-center gap-1.5">
      <span className="ml-px h-[3px] flex-1 border-y border-[#a0a0a0]" />
      <button aria-label="Close browser" className="mr-1">
        <svg width="7" height="6" viewBox="0 0 7 6"><path d="M1 0L6 6M6 0L1 6" stroke="#000" strokeWidth="1.600" /></svg>
      </button>
    </div>
    <div className="flex h-[21px] items-center justify-between bg-[#ababab] pr-1 pl-2">
      <button className="flex items-center gap-1 text-xs font-bold text-white">
        Model <Arrow size={8} className="text-white" />
      </button>
      <button aria-label="Help">
        <Svg size={14}>
          <path d="M1 1H15V13H12V16L9 13H1Z" fill="#fff9b0" stroke="#000" strokeWidth="1.300" />
          <text x="8" y="11.500" textAnchor="middle" fontSize="11" fontWeight="bold" fill="#0a2a90" fontFamily="Liberation Sans">?</text>
        </Svg>
      </button>
    </div>
    <div className="flex h-7 items-center gap-2 pb-1 pl-1">
      <button aria-label="Filter">
        <Svg size={14}><path d="M1 2H15L10 8V15L6 12V8Z" fill="#999" stroke="#222" strokeWidth="1.300" /></Svg>
      </button>
      <span className="h-[18px] w-px bg-[#888]" />
      <button aria-label="Find">
        <Svg><path d="M1 15V8L4 2H6V5H10V2H12L15 8V15H9V10H7V15Z" fill="#000" /><path d="M3 9V13M11 9V13M4 6V4" stroke="#fff" /></Svg>
      </button>
    </div>
    <div className="flex min-h-0 flex-1 flex-col border border-[#7a7a7a] bg-white">
      <div className="flex min-h-0 flex-1">
        <ul className="min-w-0 flex-1 overflow-hidden text-[10px]">
          {rows.map((row, i) => (
            <TreeRow key={i} row={row} />
          ))}
        </ul>
        <div className="flex w-[17px] flex-col border-l border-[#e5e5e5] bg-[#f3f3f3]">
          <span className="flex h-[17px] items-center justify-center"><Arrow size={6} up /></span>
          <span className="flex-[66]" />
          <span className="flex flex-[312] items-center justify-center rounded-xs border border-[#999] bg-linear-to-r from-[#f5f5f5] to-[#cfcfcf]">
            <span className="h-2 w-2 border-y border-[#666]"><span className="mt-0.5 block h-0.5 border-t border-[#666]" /></span>
          </span>
          <span className="flex-[204]" />
          <span className="flex h-[17px] items-center justify-center"><Arrow size={6} /></span>
        </div>
      </div>
      <div className="flex h-[17px] items-stretch bg-[#f0f0f0] pr-[17px]">
        <span className="flex w-[17px] items-center justify-center">
          <svg width="4" height="7" viewBox="0 0 4 7"><path d="M4 0V7L0 3.500Z" fill="#333" /></svg>
        </span>
        <span className="flex w-[98px] items-center justify-center rounded-xs border border-[#999] bg-linear-to-b from-[#f5f5f5] to-[#d2d2d2]">
          <span className="h-2 w-2 border-x border-[#666]"><span className="mx-auto block h-2 w-0.5 border-l border-[#666]" /></span>
        </span>
        <span className="flex-1" />
        <span className="flex w-[17px] items-center justify-center">
          <svg width="4" height="7" viewBox="0 0 4 7"><path d="M0 0V7L4 3.500Z" fill="#333" /></svg>
        </span>
      </div>
    </div>
  </aside>
);

const stops = (list: [number, string, number?][]) =>
  list.map(([o, c, a]) => <stop key={o} offset={o} stopColor={c} stopOpacity={a ?? 1} />);

const BODY =
  "M625 452C625 438 632 430 645 430H1012L1176 434C1188 435 1195 446 1195.500 456V505C1195 516 1189 525 1182 526L870 525L640 521C630 519 625 508 625 500Z";

const PhoneCase = () => (
  <svg width="580" height="105" viewBox="620 425 580 105" fill="none" className="absolute top-[288px] left-[383px]">
    <defs>
      <clipPath id="body"><path d={BODY} /></clipPath>
      <linearGradient id="top" x1="0" x2="0" y1="430" y2="458" gradientUnits="userSpaceOnUse">
        {stops([[0, "#b4b4b9"], [0.22, "#d6d6da"], [0.5, "#c6c6ca"], [0.75, "#bcbcc0"], [1, "#b2b2b6"]])}
      </linearGradient>
      <linearGradient id="shine" x1="655" x2="1010" y1="0" y2="0" gradientUnits="userSpaceOnUse">
        {stops([[0, "#fff", 0], [0.06, "#fff"], [0.92, "#fff"], [1, "#fff", 0]])}
      </linearGradient>
      <linearGradient id="side" x1="625" x2="652" y1="0" y2="0" gradientUnits="userSpaceOnUse">
        {stops([[0, "#86868a"], [0.3, "#a9a9ad"], [0.8, "#b4b4b8"], [1, "#9b9b9f"]])}
      </linearGradient>
      <linearGradient id="turn" x1="1002" x2="1052" y1="0" y2="0" gradientUnits="userSpaceOnUse">
        {stops([[0, "#bebec2"], [0.3, "#ababaf"], [0.85, "#6a6a6e"], [1, "#787882"]])}
      </linearGradient>
      <radialGradient id="corner" cx="1002" cy="458" r="50" gradientUnits="userSpaceOnUse">
        {stops([[0, "#bebec2"], [0.35, "#b2b2b6"], [0.6, "#a0a0a4"], [0.85, "#7a7a7e", 0.8], [1, "#787882", 0]])}
      </radialGradient>
      <linearGradient id="flank" x1="0" x2="0" y1="432" y2="526" gradientUnits="userSpaceOnUse">
        {stops([[0, "#9b9b9f"], [0.14, "#6a6a6e"], [0.22, "#787882"], [0.78, "#787882"], [1, "#a9a9bb"]])}
      </linearGradient>
      <linearGradient id="wall" x1="653" x2="1003" y1="0" y2="0" gradientUnits="userSpaceOnUse">
        {stops([[0, "#7a7a84"], [0.36, "#787882"], [0.37, "#6c6c70"], [0.44, "#929296"], [0.54, "#c3c3c7"], [1, "#c6c6c9"]])}
      </linearGradient>
      <linearGradient id="floor" x1="653" x2="1013" y1="0" y2="0" gradientUnits="userSpaceOnUse">
        {stops([[0, "#8b8b92"], [0.34, "#808087"], [0.42, "#b0b0b4"], [0.5, "#fff"], [1, "#fff"]])}
      </linearGradient>
      <linearGradient id="band" x1="0" x2="0" y1="506" y2="522" gradientUnits="userSpaceOnUse">
        {stops([[0, "#6c6c70"], [0.35, "#b4b4b8", 0.6], [0.6, "#77777c"], [0.8, "#a6a6b4"], [1, "#6c6c74"]])}
      </linearGradient>
      <linearGradient id="shade" x1="0" x2="0" y1="500" y2="522" gradientUnits="userSpaceOnUse">
        {stops([[0, "#555", 0], [1, "#55555c", 0.6]])}
      </linearGradient>
      <filter id="soft" x="-10%" y="-80%" width="120%" height="260%"><feGaussianBlur stdDeviation="1.600" /></filter>
    </defs>
    <g clipPath="url(#body)">
      <rect x="620" y="425" width="580" height="105" fill="url(#flank)" />
      <path d="M1000 458H1052V505L1020 524H1000Z" fill="url(#turn)" />
      <path d="M1002 425H1054V458H1002Z" fill="url(#corner)" />
      <path d="M620 425H1002V462H620Z" fill="url(#top)" />
      <path d="M990 430H1014V458H990Z" fill="#bcbcc0" fillOpacity=".8" filter="url(#soft)" />
      <path d="M620 450H653V524H620Z" fill="url(#side)" />
      <path d="M625 452C632 447 640 446 660 446V462H653V455Z" fill="#b6b6ba" filter="url(#soft)" />
      <path d="M655 437H1010V451H655Z" fill="url(#shine)" filter="url(#soft)" />
      <rect x="620" y="500" width="33" height="24" fill="url(#shade)" />
      <path d="M1008 508L1048 503L1052 524H1018Z" fill="#9a9aa8" fillOpacity=".6" filter="url(#soft)" />
      <path d="M653 507V472C653 462 658 457 668 457H988C997 457 1002 464 1003 472V507Z" fill="url(#wall)" stroke="#68686c" strokeWidth="1.500" />
      <path d="M655 475C656 466 660 459 668 459" stroke="#c9c9e0" />
      <path d="M668 459H985" stroke="#8a8a9c" />
      <path d="M653 506H1003L1014 522H650Z" fill="url(#floor)" />
      <path d="M652 506H782L822 522H650Z" fill="url(#band)" filter="url(#soft)" />
      <path d="M820 516H1010M820 518H1011" stroke="#8a8a90" strokeOpacity=".7" />
      <path d="M653 507C650 512 650 517 648 522" stroke="#d8d8f0" strokeWidth="1.500" />
      <path d="M640 521L780 521L830 522H1018" stroke="#6a6a70" strokeWidth="1.500" />
      <path d="M1018 523L1182 525" stroke="#8c8c9c" />
      <path d="M770 521C795 521 815 523 825 524H740L700 522Z" fill="#b7b7cc" />
      <path d="M1003 507L1014 521" stroke="#57575b" strokeWidth="1.200" />
    </g>
    <path d="M855 473H925V494H855Z" fill="#686868" />
    <path d="M1149 454H1194V506H1149Z" fill="#8b8b95" />
    <path d="M1149 454H1179L1169 466H1149Z" fill="#9797a6" />
    <path d="M1149 466H1165V501H1149Z" fill="#c0c0c4" />
    <path d="M1165 466H1169V501H1165Z" fill="#8d8d91" />
    <path d="M1149 501H1169L1179 505H1149Z" fill="#a8a8ac" />
    <path d="M1179 455V506L1169 500V466Z" fill="#66666a" />
    <path d="M1180 472H1185V495H1180Z" fill="#b4b4b8" />
    <path d="M1185 472L1194 456V504L1185 496Z" fill="#7c7c80" />
    <path d="M1149 506H1194V455" stroke="#66666e" />
  </svg>
);

const NavTool: React.FC<{ label: string; tall?: boolean; children: React.ReactNode }> = ({ label, tall, children }) => (
  <button aria-label={label} className={clsx("flex items-center justify-center", tall ? "h-7" : "h-6")}>
    {children}
  </button>
);

const NavBar = () => (
  <div className="absolute top-[141px] right-0 flex w-[35px] flex-col items-stretch rounded-md border-2 border-[#444] bg-[#858585] pb-[3px] text-[#444]">
    <button aria-label="Close navigation bar" className="mt-0.5 mr-0.5 self-end">
      <Svg size={9} box="0 0 10 10"><circle cx="5" cy="5" r="5" fill="#4c4c4c" /><path d="M3 3L7 7M7 3L3 7" stroke="#ddd" strokeWidth="1.400" /></Svg>
    </button>
    <button aria-label="Steering wheel" className="mt-2.5 flex justify-center">
      <Svg size={22} box="0 0 22 22">
        <path d="M11 1H21V11A10 10 0 1 1 11 1Z" fill="#bcbcbc" stroke="#555" />
        <circle cx="11" cy="11" r="7.500" fill="#a5a5a5" stroke="#666" />
        <circle cx="11" cy="11" r="5" fill="#bdbdbd" stroke="#666" />
        <path d="M5 17L8 14M17 17L14 14" stroke="#666" />
      </Svg>
    </button>
    <span className="mt-2.5 flex justify-center"><Arrow size={4} /></span>
    <span className="mx-1 mt-1 mb-1 h-px bg-[#5a5a5a]" />
    <NavTool label="Pan">
      <Svg size={17}>
        <path d="M5 15L1 9L2 8L5 10L3 3L5 3L7 8V1H9L9.500 8L11 2L13 2L12 9L14 6L15.500 7L12 15Z" fill="#d6d6d6" stroke="#4c4c4c" strokeWidth=".9" />
      </Svg>
    </NavTool>
    <NavTool label="Zoom">
      <Svg size={17}>
        <path d="M8 9L13 14" stroke="#4e565e" strokeWidth="3" />
        <circle cx="5.500" cy="6" r="4.500" fill="#cfd3d6" stroke="#5a5a5a" />
        <path d="M11 3H16M13.500 .5V5.500M11 7.500H16" stroke="#555" />
      </Svg>
    </NavTool>
    <span className="mt-1 flex justify-center"><Arrow size={4} /></span>
    <NavTool label="Orbit" tall>
      <Svg size={17}>
        <ellipse cx="8" cy="8" rx="3.500" ry="7" stroke="#5a5a5a" strokeWidth="1.300" />
        <ellipse cx="8" cy="8" rx="7.500" ry="3.500" stroke="#5a5a5a" strokeWidth="1.300" />
        <path d="M12 6L16 8L12 10Z" fill="#5a5a5a" />
      </Svg>
    </NavTool>
    <span className="mt-1 flex justify-center"><Arrow size={4} /></span>
    <NavTool label="Look at" tall>
      <Svg size={17}>
        <path d="M1 5H15V15H1Z" fill="#c8c8c8" stroke="#4c4c4c" />
        <path d="M4 8H12V12H4Z" fill="#a0a0a0" stroke="#4c4c4c" />
        <path d="M2 4L6 1L8 3L13 1" stroke="#5a5a5a" />
      </Svg>
    </NavTool>
    <button aria-label="Customize navigation bar" className="mt-1.5 mr-0.5 self-end">
      <Svg size={9} box="0 0 10 10"><circle cx="5" cy="5" r="4.500" fill="#777" stroke="#4c4c4c" /><path d="M3 4H7M5 7L3.500 5.500H6.500Z" stroke="#ddd" /></Svg>
    </button>
  </div>
);

const Canvas = () => (
  <main className="relative min-h-0 flex-1 overflow-hidden border-r-2 border-l border-[#e8e8e8] border-l-[#444] bg-linear-to-b from-[#303030] to-[#a0a0a0]">
    <div className="absolute top-[7px] right-0.5 flex items-center gap-2 text-white">
      <button aria-label="Minimize document"><svg width="12" height="12"><path d="M1.500 6.500H10.500V9H1.500Z" fill="#fff" /></svg></button>
      <button aria-label="Restore document">
        <svg width="12" height="12" fill="none" stroke="#fff" strokeWidth="1.500"><path d="M4 3V1H11V8H9" /><path d="M1.500 4H8.500V11H1.500Z" /></svg>
      </button>
      <button aria-label="Close document"><svg width="12" height="12"><path d="M2 2L10 10M10 2L2 10" stroke="#fff" strokeWidth="2.500" /></svg></button>
    </div>
    <svg width="56" height="54" viewBox="0 0 56 54" className="absolute top-[58px] right-[34px]">
      <path d="M1 2L51 1L55 6V48L51 53L1 52Z" fill="#767676" />
      <path d="M51 1L55 6V48L51 53Z" fill="#8a8a8a" />
      <path d="M10 11H41V43H10Z" fill="#6a6d70" />
      <text x="25" y="31" textAnchor="middle" fontSize="11" fontWeight="bold" fill="#45484c" fontFamily="Liberation Sans" transform="rotate(180 26 27)">
        BOTTOM
      </text>
    </svg>
    <NavBar />
    <PhoneCase />
    <svg width="50" height="56" viewBox="0 0 50 56" className="absolute bottom-10 left-[46px]">
      <path d="M8 45V19" stroke="#1018b8" strokeWidth="1.500" />
      <path d="M2 25L8 15L14 25Z" fill="#0a10a8" />
      <circle cx="12" cy="45" r="5.500" fill="#0f9a1a" />
      <path d="M8 45H28" stroke="#c00808" strokeWidth="1.500" />
      <path d="M27 39L37 45L27 51Z" fill="#c00808" />
      <text x="4" y="13" fontSize="12" fill="#2a32e0" fontFamily="Liberation Sans">Z</text>
      <text x="39" y="49" fontSize="12" fill="#f02a2a" fontFamily="Liberation Sans">X</text>
    </svg>
  </main>
);

const DocTabs = () => (
  <div className="flex h-[22px] shrink-0 items-start border-t border-[#eee] bg-linear-to-b from-[#e0e0e0] to-[#b4b4b4] pt-px text-black">
    <div className="flex h-5">
      {[
        <path key="a" d="M1.500 1.500H11.500V8.500H1.500ZM3.500 4.500H13.500V11.500H3.500ZM5.500 7.500H15.500V14.500H5.500Z" fill="#fff" stroke="#333" />,
        <path key="b" d="M1.500 2.500H7.500V7.500H1.500ZM9.500 2.500H15.500V7.500H9.500ZM1.500 9.500H7.500V14.500H1.500ZM9.500 9.500H15.500V14.500H9.500Z" fill="#fff" stroke="#333" />,
        <path key="c" d="M3 8L8 3L13 8Z" fill="#222" />,
      ].map((d, i) => (
        <button key={i} aria-label={["Cascade", "Arrange", "Document list"][i]} className="flex w-5 items-center justify-center border border-[#555] bg-linear-to-b from-[#f5f5f5] to-[#c8c8c8]">
          <Svg>{d}</Svg>
        </button>
      ))}
    </div>
    <button className="h-[19px] w-[98px] rounded-b-md border border-t-0 border-[#555] bg-linear-to-b from-[#d2d2d2] to-[#bdbdbd]">Assembly1.iam</button>
    <button className="flex h-[19px] w-[141px] items-center justify-center gap-1.5 rounded-b-md border border-t-0 border-[#555] bg-white">
      THIS ONEphone...ipt
      <svg width="9" height="9" viewBox="0 0 9 9" className="mb-1"><path d="M1 1L8 8M8 1L1 8" stroke="#666" strokeWidth="3" /><path d="M1 1L8 8M8 1L1 8" stroke="#fff" /></svg>
    </button>
  </div>
);

const taskIcons: { name: string; look?: string; art: React.ReactNode }[] = [
  {
    name: "Windows Explorer",
    look: "border border-[#b9cddb]/80 bg-linear-to-br from-[#9fb6c8] via-[#56809f] to-[#6d94b0]",
    art: (
      <>
        <path d="M3 5H12L14 3H23L25 6H29V26H3Z" fill="#f5dc86" stroke="#c39a3a" />
        <path d="M3 8H29V26H3Z" fill="#fbe9a6" stroke="#d6b356" />
        <path d="M5 3H9V5H5Z" fill="#2aa52a" /><path d="M14 3H18V5H14Z" fill="#d03030" /><path d="M21 6H27V8H21Z" fill="#3a86d8" />
        <path d="M8 31V23C8 20 10 19 12 19H22C25 19 27 21 27 24V31H23V25H12V31Z" fill="#8cc8ee" stroke="#4d93c4" />
      </>
    ),
  },
  {
    name: "HP",
    art: (
      <>
        <circle cx="16" cy="16" r="15.500" fill="#0e1117" />
        <circle cx="16" cy="16" r="11" fill="#3b4450" />
        <g stroke="#fff" strokeWidth="2">
          <path d="M13 5L8 23M11 13H15L12 23" />
          <path d="M17 28L21 13H25L22 22H19" />
        </g>
      </>
    ),
  },
  {
    name: "Media Player",
    art: (
      <>
        <path d="M12 6H27V28H12Z" fill="#7db8de" stroke="#3f86b8" />
        <path d="M9 5H24V29H9Z" fill="#a9d2ec" stroke="#4c93c4" />
        <path d="M3 4H21V29H3Z" fill="#eaf4fb" stroke="#8ab8d8" />
        <circle cx="13" cy="16.500" r="8.500" fill="#f07a1c" />
        <path d="M10 11L18 16.500L10 22Z" fill="#fff" />
      </>
    ),
  },
  {
    name: "Internet Explorer",
    look: "border border-[#b9cddb]/80 bg-linear-to-br from-[#86a2b8] via-[#43708f] to-[#5e8bab]",
    art: (
      <>
        <path d="M28 18H12C12 24 20 25 22 21H28C25 32 6 32 6 17C6 3 28 2 28 18ZM12 14H22C21 9 13 9 12 14Z" fill="#5cc4f2" stroke="#1c7fc0" />
        <path d="M29 8C31 3 28 0 21 3C10 8 1 22 3 29C4 31 7 30 9 29" stroke="#f5c21c" strokeWidth="2.500" />
      </>
    ),
  },
  {
    name: "Chrome",
    look: "border border-[#b9cddb]/80 bg-linear-to-br from-[#86a2b8] via-[#5d7a86] to-[#6b97ae]",
    art: (
      <>
        <path d="M16 16L3 9A15 15 0 0 1 29 9H16Z" fill="#dc3526" />
        <path d="M16 16L29 9A15 15 0 0 1 15 31L22 19Z" fill="#fbd229" />
        <path d="M16 16L15 31A15 15 0 0 1 3 9L10 20Z" fill="#3fa648" />
        <circle cx="16" cy="16" r="7" fill="#fff" />
        <circle cx="16" cy="16" r="5.500" fill="#3f7fe0" />
      </>
    ),
  },
  {
    name: "Inventor",
    look: "border border-white/80 bg-linear-to-br from-[#e6edf2] via-[#a5bccb] to-[#9db9cc]",
    art: (
      <>
        <path d="M6 4H31V24H6Z" fill="#4c4c4c" />
        <path d="M15 5H31V20L18 23Z" fill="#8b8b8b" />
        <path d="M18 5C27 8 22 20 30 22M31 8C24 8 19 16 20 22" stroke="#3a3a3a" strokeWidth="2" />
        <path d="M2 23H31V32H2Z" fill="#f5f5f5" />
        <path d="M0 1L11 0V4L9 5L11 20L14 21L6 24L4 7H1Z" fill="#f2b21c" stroke="#8a5b06" strokeWidth=".7" />
        <text x="14" y="31" fontSize="8" fontWeight="bold" fill="#000" fontFamily="Liberation Sans">PRO</text>
      </>
    ),
  },
  {
    name: "Help",
    look: "border border-[#fff2b0] bg-linear-to-br from-[#f8e08a] via-[#eeb64f] to-[#dd8a3e]",
    art: (
      <>
        <circle cx="16" cy="16" r="15" fill="#dfe4f2" stroke="#27407c" />
        <circle cx="16" cy="16" r="13" fill="#1c3c9c" />
        <text x="16" y="25" textAnchor="middle" fontSize="25" fontWeight="bold" fill="#fff" fontFamily="Liberation Sans">?</text>
      </>
    ),
  },
  {
    name: "Paint",
    look: "border border-[#b9cddb]/80 bg-linear-to-br from-[#9fb6c8] via-[#5482a3] to-[#5e8bab]",
    art: (
      <>
        <path d="M3 20C0 12 9 6 18 8C27 10 29 18 25 24C22 30 17 26 13 26C8 28 4 25 3 20Z" fill="#dcecf7" stroke="#6f9cba" />
        <circle cx="7" cy="19" r="2.500" fill="#e04a3a" /><circle cx="10" cy="13" r="2.300" fill="#4aa83c" />
        <circle cx="16" cy="11" r="2" fill="#e7c02a" /><circle cx="14" cy="21" r="2.500" fill="#3f8ad8" />
        <path d="M27 8L22 30" stroke="#e08a2a" strokeWidth="2.500" />
        <path d="M25 9C24 5 27 5 26 1C29 2 30 0 32 2C33 5 31 9 29 10Z" fill="#a4714a" />
      </>
    ),
  },
];

const TrayIcon: React.FC<{ label: string; children: React.ReactNode }> = ({ label, children }) => (
  <button aria-label={label} className="flex w-6 justify-center">
    <Svg>{children}</Svg>
  </button>
);

const Taskbar = () => (
  <footer className="flex h-[39px] shrink-0 items-stretch border-t border-[#101a24] bg-linear-to-r from-[#234a68] via-[#3a6b92] to-[#26475f] text-white">
    <div className="flex flex-1 items-stretch border-t border-[#8aa6bb]/70">
      <button aria-label="Start" className="flex w-[60px] items-center pl-2">
        <Svg size={37} box="0 0 38 38">
          <defs>
            <radialGradient id="orb" cx=".5" cy=".95" r=".9">
              {stops([[0, "#4fe0ff"], [0.35, "#1f83bd"], [0.8, "#174872"], [1, "#6f95ad"]])}
            </radialGradient>
          </defs>
          <circle cx="19" cy="19" r="18" fill="url(#orb)" stroke="#8fb0c4" />
          <path d="M9 11C12 9 15 9 18 11L16 18C13 16 10 16 7 18Z" fill="#ee5a24" />
          <path d="M20 11C23 13 26 13 30 11L28 18C24 20 21 20 18 18Z" fill="#8cc63f" />
          <path d="M7 20C10 18 13 18 16 20L14 27C11 25 8 25 6 27Z" fill="#3fa2ea" />
          <path d="M17 20C20 22 23 22 27 20L25 27C22 29 19 29 15 27Z" fill="#fdc82a" />
        </Svg>
      </button>
      <div className="flex gap-1">
        {taskIcons.map(({ name, look, art }) => (
          <button key={name} aria-label={name} className={clsx("flex w-[58px] items-center justify-center rounded-xs", look)}>
            <Svg size={32} box="0 0 32 32">{art}</Svg>
          </button>
        ))}
      </div>
      <div className="ml-auto flex items-center">
        <button aria-label="HP Support" className="mr-1.5">
          <Svg size={32} box="0 0 32 32">
            <circle cx="13" cy="19" r="12" fill="#0a1740" stroke="#2c7fd0" strokeWidth="1.300" />
            <text x="12" y="28" textAnchor="middle" fontSize="23" fontWeight="bold" fill="#fff" fontFamily="Liberation Sans">?</text>
            <circle cx="22" cy="9" r="8.500" fill="#d8141c" stroke="#fff" />
            <path d="M19 6A4.500 4.500 0 1 0 25 6M22 3V9" stroke="#fff" strokeWidth="2" />
          </Svg>
        </button>
        <button aria-label="Show hidden icons" className="flex w-6 justify-center"><Arrow size={8} up className="text-white" /></button>
        <TrayIcon label="Power">
          <path d="M7 2H2V15H6M2 2H9V5" stroke="#fff" strokeWidth="1.500" />
          <path d="M7 6H15V10L13 12H12V15H10V12H9L7 10ZM9 3V6M13 3V6" fill="#fff" stroke="#fff" />
        </TrayIcon>
        <TrayIcon label="Volume">
          <path d="M2 5H5L9 1V15L5 11H2Z" fill="#fff" />
          <path d="M11 5C12.500 7 12.500 9 11 11" stroke="#fff" strokeWidth="1.300" />
        </TrayIcon>
        <TrayIcon label="Bluetooth">
          <rect x="3" y="1" width="10" height="14" rx="5" fill="#0a5cd0" />
          <path d="M5.500 5.500L10.500 10.500L8 13V3L10.500 5.500L5.500 10.500" stroke="#fff" strokeWidth="1.200" />
        </TrayIcon>
        <TrayIcon label="Action Center">
          <path d="M2 1V15" stroke="#fff" strokeWidth="1.500" />
          <path d="M4 2H9V4H15L13 7L15 9H9V8H4Z" fill="#fff" />
        </TrayIcon>
        <TrayIcon label="Network">
          <path d="M0 13H2V15H0ZM3 11H5V15H3ZM6 8H8V15H6ZM9 6H11V15H9Z" fill="#fff" />
          <path d="M12.500 3.500H14.500V14.500H12.500Z" stroke="#8fa6b8" />
        </TrayIcon>
        <time className="w-[85px] pl-0.5 text-center leading-[17px]">
          12:15
          <br />
          05/04/2012
        </time>
        <button aria-label="Show desktop" className="h-full w-3.5 border border-[#8aa6bb] bg-linear-to-b from-[#6f8ea6] to-[#345a78]" />
      </div>
    </div>
  </footer>
);

export default function App() {
  return (
    <div className="flex h-screen flex-col overflow-hidden bg-[#f0f0f0] font-['Noto_Sans','Open_Sans',sans-serif] text-[11px] leading-4">
      <Header />
      <Ribbon />
      <div className="flex min-h-0 flex-1">
        <Browser />
        <div className="flex min-w-0 flex-1 flex-col">
          <Canvas />
          <DocTabs />
        </div>
      </div>
      <div className="flex h-[21px] shrink-0 items-center border-t border-[#999] bg-linear-to-b from-[#f4f4f4] to-[#b2b2b2] pl-0.5 text-black">
        <span>Ready</span>
        <span className="ml-auto w-[30px]">1</span>
        <span className="h-4 w-px bg-[#ddd]" />
        <span className="w-[39px] pl-2">9</span>
      </div>
      <Taskbar />
    </div>
  );
}
